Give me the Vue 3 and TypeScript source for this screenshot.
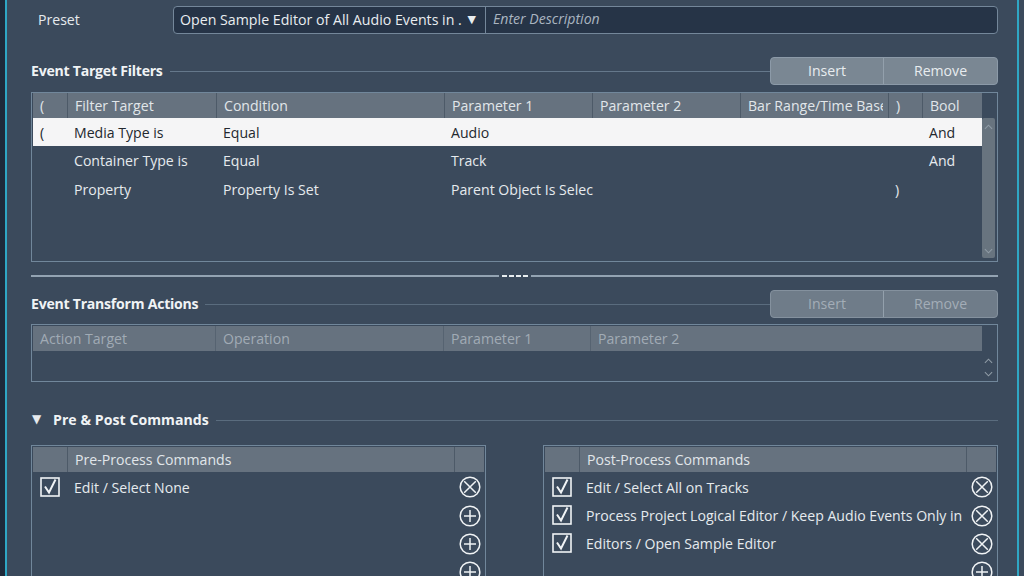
<script setup lang="ts">
interface Row { cells: string[]; selected?: boolean }
const filterCols = ['(', 'Filter Target', 'Condition', 'Parameter 1', 'Parameter 2', 'Bar Range/Time Base', ')', 'Bool']
const filterRows: Row[] = [
  { cells: ['(', 'Media Type is', 'Equal', 'Audio', '', '', '', 'And'], selected: true },
  { cells: ['', 'Container Type is', 'Equal', 'Track', '', '', '', 'And'] },
  { cells: ['', 'Property', 'Property Is Set', 'Parent Object Is Selec', '', '', ')', ''] },
]
const actionCols = ['Action Target', 'Operation', 'Parameter 1', 'Parameter 2']
const panels = [
  { title: 'Pre-Process Commands', rows: ['Edit / Select None'] },
  { title: 'Post-Process Commands', rows: ['Edit / Select All on Tracks', 'Process Project Logical Editor / Keep Audio Events Only in', 'Editors / Open Sample Editor'] },
]
function slots(rows: string[]): (string | null)[] {
  const out: (string | null)[] = [...rows]
  while (out.length < 4) out.push(null)
  return out
}
</script>

<template>
  <div class="app">
    <div class="frame">
      <div class="preset-row">
        <span class="preset-label">Preset</span>
        <div class="preset-box">
          <div class="combo"><span class="combo-text">Open Sample Editor of All Audio Events in .</span><span class="combo-arrow">▼</span></div>
          <div class="desc">Enter Description</div>
        </div>
      </div>

      <div class="section first">
        <span class="title">Event Target Filters</span>
        <span class="rule"></span>
        <div class="btns"><span class="btn">Insert</span><span class="btn">Remove</span></div>
      </div>

      <div class="table filters">
        <div class="main">
          <div class="head filter-grid">
            <span v-for="c in filterCols" :key="c" class="hcell">{{ c }}</span>
          </div>
          <div v-for="(r, i) in filterRows" :key="i" class="row filter-grid" :class="{ selected: r.selected }">
            <span v-for="(c, j) in r.cells" :key="j" class="cell">{{ c }}</span>
          </div>
        </div>
        <div class="scroll">
          <div class="scroll-corner"></div>
          <div class="scroll-track">
            <svg class="chev" viewBox="0 0 10 6"><path d="M1 5 L5 1 L9 5" /></svg>
            <svg class="chev" viewBox="0 0 10 6"><path d="M1 1 L5 5 L9 1" /></svg>
          </div>
        </div>
      </div>

      <div class="splitter">
        <span class="split-line"></span>
        <span class="dashes"><i></i><i></i><i></i><i></i></span>
        <span class="split-line"></span>
      </div>

      <div class="section second">
        <span class="title">Event Transform Actions</span>
        <span class="rule dim"></span>
        <div class="btns disabled"><span class="btn">Insert</span><span class="btn">Remove</span></div>
      </div>

      <div class="table actions">
        <div class="main">
          <div class="head action-grid">
            <span v-for="c in actionCols" :key="c" class="hcell">{{ c }}</span>
          </div>
        </div>
        <div class="scroll plain">
          <div class="scroll-corner"></div>
          <div class="mini-chevs">
            <svg class="chev" viewBox="0 0 10 6"><path d="M1 5 L5 1 L9 5" /></svg>
            <svg class="chev" viewBox="0 0 10 6"><path d="M1 1 L5 5 L9 1" /></svg>
          </div>
        </div>
      </div>

      <div class="section third">
        <span class="tri">▼</span>
        <span class="title">Pre &amp; Post Commands</span>
        <span class="rule dim"></span>
      </div>

      <div class="panels">
        <div v-for="p in panels" :key="p.title" class="panel">
          <div class="phead">
            <span class="hcell"></span>
            <span class="hcell">{{ p.title }}</span>
            <span class="hcell"></span>
          </div>
          <div v-for="(r, i) in slots(p.rows)" :key="i" class="prow">
            <span class="check-cell">
              <svg v-if="r" class="check" viewBox="0 0 20 20">
                <rect x="1" y="1" width="18" height="18" />
                <path d="M5 9.5 L9 15.5 L15.5 2.5" />
              </svg>
            </span>
            <span class="ptext">{{ r }}</span>
            <svg class="round" viewBox="0 0 22 22">
              <circle cx="11" cy="11" r="9.8" />
              <path v-if="r" d="M5.2 5.2 L16.8 16.8 M16.8 5.2 L5.2 16.8" />
              <path v-else d="M5 11 H17 M11 5 V17" />
            </svg>
          </div>
        </div>
      </div>
    </div>
  </div>
</template>

<style>
html, body { margin: 0; background: #3b4a5c; }
</style>

<style scoped>
.app {
  width: 1024px;
  height: 576px;
  overflow: hidden;
  box-sizing: border-box;
  background: #3b4a5c;
  padding-left: 5px;
  padding-right: 5px;
  font-family: "Open Sans", "Noto Sans", sans-serif;
  font-size: 14.1px;
  color: #e6eaee;
  box-shadow: inset 5px 0 0 #1e2a3a;
}
.frame {
  height: 576px;
  box-sizing: border-box;
  border-left: 2px solid #2fa6c4;
  border-right: 2px solid #2fa6c4;
  padding: 6px 19px 0 24px;
  display: flex;
  flex-direction: column;
}
.frame > * { flex: none; }
.preset-row { display: flex; align-items: center; height: 28px; }
.preset-label { width: 142px; padding-left: 7px; padding-bottom: 2px; box-sizing: border-box; }
.preset-box {
  flex: 1;
  height: 28px;
  box-sizing: border-box;
  display: flex;
  border: 1px solid #74879a;
  border-radius: 4px;
  background: #263447;
}
.combo {
  width: 312px;
  flex: none;
  box-sizing: border-box;
  border-right: 1px solid #74879a;
  padding: 0 9px 2px 6px;
  display: flex;
  align-items: center;
  justify-content: space-between;
  white-space: nowrap;
  font-size: 14.2px;
  color: #e9edf0;
}
.combo-arrow { font-size: 11px; font-family: "DejaVu Sans", sans-serif; }
.desc { padding-left: 7px; line-height: 24px; font-style: italic; color: #aab5c0; }

.section { display: flex; align-items: center; height: 28px; }
.section.first { margin-top: 23px; }
.section.second { margin-top: 13px; }
.section.third { margin-top: 24px; }
.title { font-weight: 700; color: #f0f3f5; white-space: nowrap; letter-spacing: -0.25px; padding-bottom: 2px; }
.third .title { letter-spacing: 0.05px; }
.tri { width: 22px; padding-left: 1px; padding-bottom: 2px; box-sizing: border-box; font-size: 12px; font-family: "DejaVu Sans", sans-serif; }
.rule { flex: 1; height: 1px; background: #65788b; margin-left: 7px; }
.rule.dim { background: #5a6c7e; }
.btns {
  display: flex;
  flex: none;
  width: 228px;
  height: 28px;
  box-sizing: border-box;
  border: 1px solid #8c9aa8;
  border-radius: 4px;
  background: #7a8793;
}
.btn { flex: 1; display: flex; align-items: center; justify-content: center; padding-bottom: 2px; color: #e8ecef; }
.btn:first-child { flex: 0 0 112px; }
.btn + .btn { border-left: 1px solid #93a0ac; }
.btns.disabled { background: #6f7c89; border-color: #84919e; }
.btns.disabled .btn { color: #a3adb7; }

.table {
  display: flex;
  border: 1px solid #71879b;
  padding: 0 1px;
  box-sizing: border-box;
  margin-top: 7px;
}
.filters { height: 170px; }
.actions { height: 58px; margin-top: 6px; padding-top: 1px; }
.main { flex: 1; min-width: 0; }
.head { height: 25px; background: #66727f; }
.filter-grid { display: grid; grid-template-columns: 34px 149px 228px 148px 148px 148px 34px 60px; }
.action-grid { display: grid; grid-template-columns: 182px 228px 147px 392px; }
.hcell {
  box-sizing: border-box;
  padding-left: 7px;
  line-height: 25px;
  white-space: nowrap;
  overflow: hidden;
  clip-path: inset(0 5px 0 0);
  border-left: 1px solid #4d5a68;
  color: #e1e6ea;
}
.hcell:first-child { border-left: none; }
.actions .hcell { color: #a1abb5; border-left-color: #566371; }
.row { height: 28.4px; align-items: center; }
.row.selected { height: 28px; background: #f5f5f6; color: #23282e; }
.cell { padding-left: 7px; padding-top: 1px; white-space: nowrap; }
.scroll { width: 14px; flex: none; display: flex; flex-direction: column; }
.scroll-corner { height: 25px; flex: none; }
.scroll-track {
  flex: 1;
  margin: 0 1px 3px 0;
  background: #68747f;
  border-radius: 2px;
  display: flex;
  flex-direction: column;
  justify-content: space-between;
  align-items: center;
  padding: 6px 0 4px;
}
.chev { width: 9px; height: 6px; fill: none; stroke: #8f9ba6; stroke-width: 1.2; }
.mini-chevs { flex: 1; display: flex; flex-direction: column; justify-content: flex-end; gap: 7px; align-items: center; padding: 0 1px 4px 0; }

.splitter { display: flex; align-items: center; gap: 3px; height: 3px; margin-top: 12px; }
.split-line { flex: 1; height: 2px; background: #93a3b2; }
.dashes { display: flex; gap: 2px; }
.dashes i { display: block; width: 5px; height: 2px; background: #e8edf0; }

.panels { display: flex; justify-content: space-between; margin-top: 11px; }
.panel {
  width: 455px;
  height: 140px;
  flex: none;
  box-sizing: border-box;
  border: 1px solid #71879b;
  border-bottom: none;
  padding: 1px 1px 0;
}
.phead { display: grid; grid-template-columns: 34px 1fr 30px; height: 25px; margin-bottom: 1px; background: #66727f; }
.prow { display: flex; align-items: center; height: 28.4px; }
.check-cell { width: 34px; flex: none; display: flex; justify-content: center; box-sizing: border-box; padding: 0 1px 1px 0; }
.check { width: 20px; height: 20px; fill: none; stroke: #f0f3f5; }
.check rect { stroke-width: 1.6; }
.check path { stroke-width: 2; }
.ptext { flex: 1; min-width: 0; padding-left: 7px; white-space: nowrap; overflow: hidden; }
.round { width: 22px; height: 22px; flex: none; margin-right: 3px; fill: none; stroke: #f0f3f5; stroke-width: 1.5; }
</style>
